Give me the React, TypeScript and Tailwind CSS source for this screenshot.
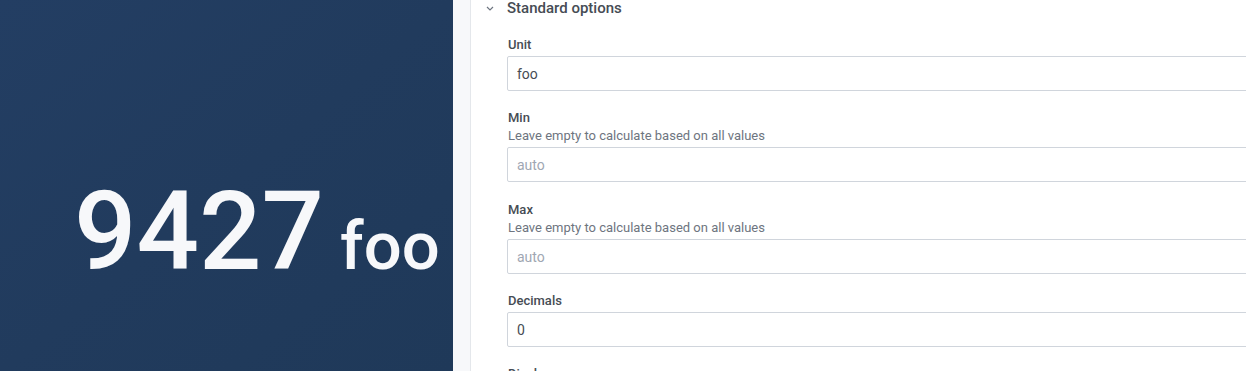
const Field = ({
  label,
  description,
  value,
  placeholder,
  extra,
}: {
  label: string;
  description?: string;
  value?: string;
  placeholder?: string;
  extra?: boolean;
}) => (
  <div className={extra ? 'mb-[17px]' : 'mb-4'}>
    <div className="pt-[2px] mb-[2px] pl-[1px]">
      <div className="text-[13px] leading-[18px] font-medium text-[#464c54]">{label}</div>
      {description && (
        <div className="text-[13px] leading-[18px] text-[#6e7580]">{description}</div>
      )}
    </div>
    <input
      readOnly
      value={value ?? ''}
      placeholder={placeholder}
      className="block w-[900px] h-[35px] px-[9px] border border-[#d0d5dc] rounded-[2px] bg-white text-[14px] text-[#464c54] placeholder:text-[#9fa7b3] outline-none"
    />
  </div>
);

const App = () => {
  return (
    <div className="flex w-[1246px] h-[371px] overflow-hidden bg-white font-['Roboto',sans-serif]">
      <div className="w-[453px] shrink-0 bg-gradient-to-br from-[#233e63] via-[#213b5d] to-[#1f3959] pt-[177px] pl-[74px]">
        <div className="flex items-baseline text-[#f7f8fa] font-medium">
          <span className="text-[110px] leading-none">9427</span>
          <span className="text-[67px] leading-none ml-[16px]">foo</span>
        </div>
      </div>
      <div className="w-[18px] shrink-0 bg-[#f7f8fa] border-r border-[#e4e7eb]" />
      <div className="flex-1 pl-[13px]">
        <div className="flex items-center h-4 mb-[18px]">
          <svg width="12" height="12" viewBox="0 0 12 12" className="mr-[11px] text-[#6e7580]">
            <polyline points="3,5 6,8 9,5" fill="none" stroke="currentColor" strokeWidth="1.2" />
          </svg>
          <span className="text-[15px] leading-4 font-medium text-[#464c54]">Standard options</span>
        </div>
        <div className="pl-[23px]">
          <Field label="Unit" value="foo" />
          <Field label="Min" description="Leave empty to calculate based on all values" placeholder="auto" extra />
          <Field label="Max" description="Leave empty to calculate based on all values" placeholder="auto" />
          <Field label="Decimals" value="0" />
          <Field label="Display name" />
        </div>
      </div>
    </div>
  );
};

export default App;
